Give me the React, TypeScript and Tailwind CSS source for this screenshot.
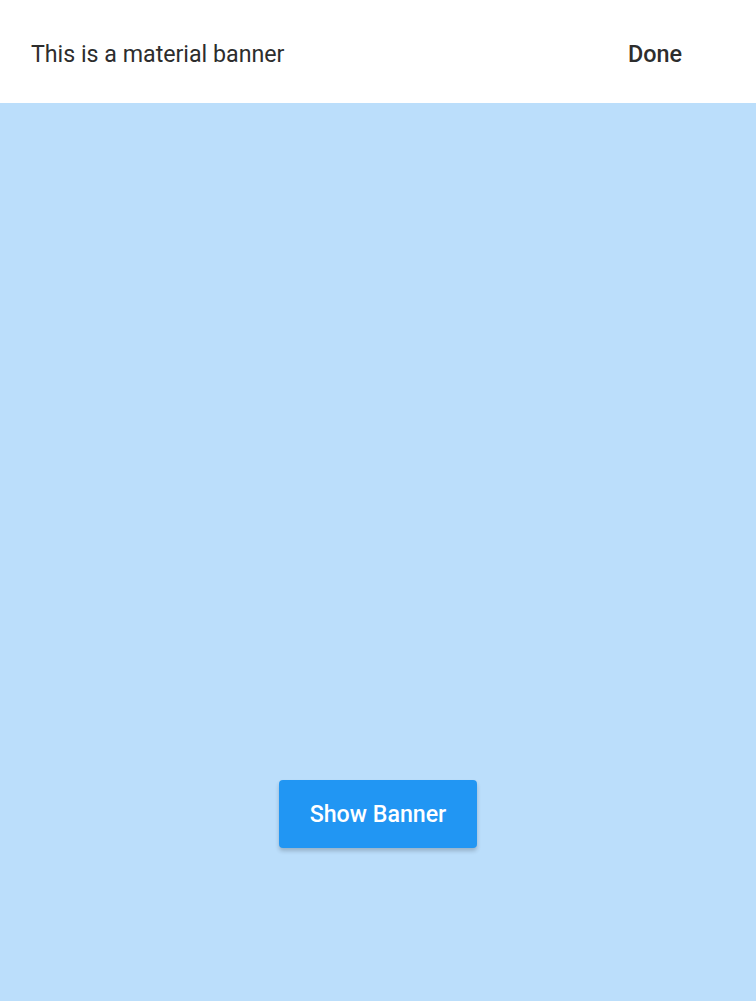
import React from "react";

const App: React.FC = () => {
  return (
    <div className="flex h-[1001px] w-full flex-col bg-[#bbdefb] font-['Roboto',sans-serif]">
      <div className="flex h-[103px] items-center justify-between bg-white pl-[31px] pr-[74px] pt-[6px]">
        <span className="text-[23.2px] text-[#2d2d2d]">This is a material banner</span>
        <button className="text-[23.4px] font-medium text-[#2d2d2d]">Done</button>
      </div>
      <div className="flex flex-col items-center pt-[677px]">
        <button className="h-[68px] w-[198px] rounded-[4px] bg-[#2196f3] text-[23.2px] font-medium text-white shadow-[0_3px_4px_rgba(0,0,0,0.2)]">
          Show Banner
        </button>
      </div>
    </div>
  );
};

export default App;
